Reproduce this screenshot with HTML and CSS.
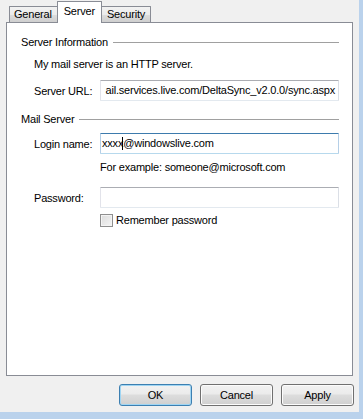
FILE: index.html
```html
<!DOCTYPE html>
<html>
<head>
<meta charset="utf-8">
<link rel="stylesheet" href="styles.css">
</head>
<body>
<div class="window">
  <div class="tabs">
    <div class="tab">General</div>
    <div class="tab active">Server</div>
    <div class="tab">Security</div>
  </div>
  <div class="panel">
    <div class="group g1"><span>Server Information</span><i class="rule"></i></div>
    <div class="line info">My mail server is an HTTP server.</div>
    <div class="row url-row">
      <label>Server URL:</label>
      <div class="input url"><span>ail.services.live.com/DeltaSync_v2.0.0/sync.aspx</span></div>
    </div>
    <div class="group g2"><span>Mail Server</span><i class="rule"></i></div>
    <div class="row login-row">
      <label>Login name:</label>
      <div class="input focus"><span>xxxx</span><b class="caret"></b><span>@windowslive.com</span></div>
    </div>
    <div class="line example">For example: someone@microsoft.com</div>
    <div class="row pw-row">
      <label>Password:</label>
      <div class="input"></div>
    </div>
    <div class="check-row">
      <span class="box"></span><span>Remember password</span>
    </div>
  </div>
  <div class="buttons">
    <div class="btn default">OK</div>
    <div class="btn">Cancel</div>
    <div class="btn">Apply</div>
  </div>
</div>
</body>
</html>
```

FILE: styles.css
```css
html, body {
  margin: 0;
  padding: 0;
}
body {
  width: 363px;
  height: 419px;
  background: #bad2ec;
  font-family: "Liberation Sans", Arial, sans-serif;
  font-size: 11px;
  letter-spacing: -0.2px;
  color: #000;
  overflow: hidden;
}
.window {
  width: 359px;
  height: 412px;
  background: #f0f0f0;
  display: flex;
  flex-direction: column;
  box-sizing: border-box;
}
.tabs {
  display: flex;
  align-items: flex-end;
  height: 23px;
  padding-left: 9px;
  position: relative;
  z-index: 2;
  margin-bottom: -1px;
}
.tab {
  height: 15px;
  line-height: 15px;
  border: 1px solid #898c95;
  border-bottom: none;
  background: linear-gradient(#f2f2f2, #ebebeb 50%, #dddddd 51%, #cfcfcf);
  padding: 0 5px;
  margin-bottom: 1px;
  border-radius: 1px 1px 0 0;
}
.tab:first-child { padding: 0 5px 0 4px; }
.tab.active {
  height: 21px;
  line-height: 18px;
  background: #fff;
  margin-bottom: 0;
  padding: 0 6px;
  margin-left: -1px;
  margin-right: -1px;
  position: relative;
  z-index: 3;
}
.panel {
  margin-left: 6px;
  width: 347px;
  height: 354px;
  box-sizing: border-box;
  border: 1px solid #898c95;
  background: #fff;
  display: flex;
  flex-direction: column;
  padding: 0 13px 0 14px;
}
.group {
  height: 14px;
  line-height: 14px;
  display: flex;
  align-items: center;
  gap: 5px;
}
.group .rule {
  flex: 1;
  height: 1px;
  background: #a0a0a0;
  margin-top: 1px;
}
.g1 { margin-top: 12px; }
.g2 { margin-top: 11px; }
.line {
  height: 14px;
  line-height: 14px;
  white-space: nowrap;
}
.info { margin-top: 8px; padding-left: 13px; }
.row {
  display: flex;
  align-items: center;
  padding-left: 13px;
  height: 21px;
}
.row label {
  width: 66px;
  flex: none;
}
.url-row { margin-top: 9px; }
.login-row { margin-top: 7px; }
.pw-row { margin-top: 13px; }
.input {
  width: 240px;
  height: 21px;
  box-sizing: border-box;
  border: 1px solid #abadb3;
  border-left-color: #e2e3ea;
  border-right-color: #dbdfe6;
  border-bottom-color: #e3e9ef;
  border-radius: 1px;
  background: #fff;
  display: flex;
  align-items: center;
  white-space: nowrap;
  overflow: hidden;
  padding: 0 2px 1px 1px;
}
.input.url {
  justify-content: flex-end;
  padding-right: 3px;
}
.input.focus {
  border-color: #3d7bad;
  border-left-color: #b5cfe7;
  border-right-color: #b5cfe7;
  border-bottom-color: #b7d9ed;
}
.caret {
  display: inline-block;
  width: 1px;
  height: 13px;
  background: #000;
  margin: 0 0 0 -1px;
}
.example { margin-top: 6px; padding-left: 79px; }
.check-row {
  margin-top: 5px;
  padding-left: 79px;
  height: 14px;
  display: flex;
  align-items: center;
  gap: 3px;
}
.box {
  width: 11px;
  height: 11px;
  border: 1px solid #8f8f8f;
  background: linear-gradient(135deg, #dcdcdc, #f5f5f5);
  box-shadow: inset 0 0 0 1px #f4f4f4;
  flex: none;
}
.buttons {
  display: flex;
  justify-content: flex-end;
  gap: 8px;
  margin-top: 8px;
  padding-right: 5px;
}
.btn {
  width: 73px;
  height: 22px;
  box-sizing: border-box;
  border: 1px solid #707070;
  border-radius: 3px;
  background: linear-gradient(#f2f2f2, #ebebeb 45%, #dddddd 50%, #cfcfcf);
  box-shadow: inset 0 0 0 1px #fcfcfc;
  display: flex;
  align-items: center;
  justify-content: center;
  line-height: 14px;
}
.btn.default {
  border-color: #3c7fb1;
  box-shadow: inset 0 0 0 1px #9fd5f3;
}
```
